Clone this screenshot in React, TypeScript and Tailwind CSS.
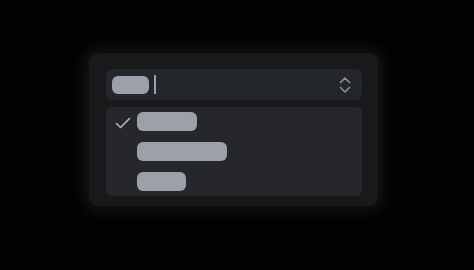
export default function App() {
  return (
    <div className="w-[474px] h-[270px] bg-[#030303] pl-[89px] pt-[53px]">
      <div className="w-[289px] h-[153px] rounded-[9px] bg-[#19191b] shadow-[0_0_14px_4px_rgba(38,38,40,0.55)] pl-[17px] pr-[16px] pt-[16px] flex flex-col gap-[7px]">
        <div className="h-[31px] rounded-[6px] bg-[#23262a] flex items-center pl-[6px] pr-[10px]">
          <div className="w-[37px] h-[18px] rounded-[6px] bg-[#9ca0a9]" />
          <div className="ml-[5px] w-[2px] h-[19px] bg-[#9ca0a9]" />
          <div className="flex-1" />
          <svg width="14" height="18" viewBox="0 0 14 18" fill="none" stroke="#8c8f95" strokeWidth="1.6" strokeLinecap="round" strokeLinejoin="round">
            <path d="M2.5 6.5 L7 2 L11.5 6.5" />
            <path d="M2.5 11.5 L7 16 L11.5 11.5" />
          </svg>
        </div>
        <div className="h-[89px] rounded-[6px] bg-[#25272b] pt-[5px] pb-[5px] pl-[9px] flex flex-col gap-[11px]">
          <div className="flex items-center h-[19px]">
            <svg width="16" height="12" viewBox="0 0 16 12" fill="none" stroke="#b2b5ba" strokeWidth="1.6" strokeLinecap="round" strokeLinejoin="round" className="mt-[2px]">
              <path d="M1.5 6.5 L5.5 10.5 L14.5 1.5" />
            </svg>
            <div className="ml-[6px] w-[60px] h-[19px] rounded-[6px] bg-[#9ca0a9]" />
          </div>
          <div className="flex items-center h-[19px] pl-[22px]">
            <div className="w-[90px] h-[19px] rounded-[6px] bg-[#9ca0a9]" />
          </div>
          <div className="flex items-center h-[19px] pl-[22px]">
            <div className="w-[49px] h-[19px] rounded-[6px] bg-[#9ca0a9]" />
          </div>
        </div>
      </div>
    </div>
  );
}
